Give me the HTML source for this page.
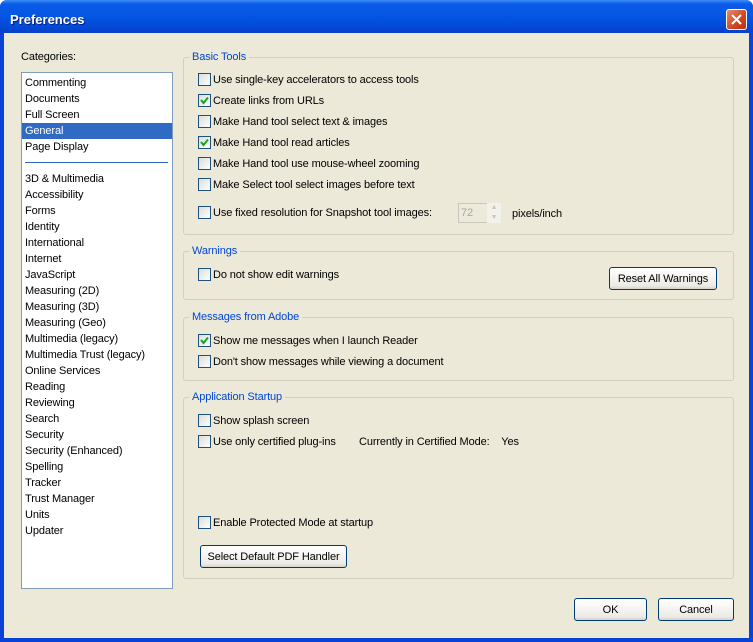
<!DOCTYPE html>
<html><head><style>
body{margin:0;width:753px;height:642px;overflow:hidden;font-family:"Liberation Sans",Tahoma,sans-serif;font-size:11px;color:#000;letter-spacing:-0.12px}
.win{position:absolute;left:0;top:0;width:753px;height:642px;background:#0842d6;border-radius:7px 7px 0 0;}
.title{position:absolute;left:0;top:0;width:753px;height:33px;background:linear-gradient(#3d8cf6 0,#0a5ce8 4px,#0556e3 16px,#0248d6 28px,#0a40c8 33px);border-radius:7px 7px 0 0;}
.title span{position:absolute;left:10px;top:12px;color:#fff;font-weight:bold;font-size:13px;text-shadow:1px 1px #0a1e78;letter-spacing:0}
.close{position:absolute;left:726px;top:9px;width:19px;height:19px;border:1px solid #fff;border-radius:3px;background:linear-gradient(135deg,#e88a6e,#d0451e 60%,#b8340e);}
.close svg{position:absolute;left:3px;top:3px}
.body{position:absolute;left:4px;top:33px;width:745px;height:605px;background:#ece9d8;}
.a{position:absolute;white-space:nowrap}
.t{margin-top:1px}
.list{position:absolute;left:21px;top:72px;width:150px;height:515px;background:#fff;border:1px solid #7f9db9;}
.list div{height:16px;line-height:16px;padding-left:3px}
.sel{background:#316ac5;color:#fff;margin:0 0 0 0}
.grp{position:absolute;border:1px solid #d0d0bf;border-radius:3px;}
.grp .lg{position:absolute;left:5px;top:-7px;background:#ece9d8;color:#0046d5;padding:0 3px;}
.cb{position:absolute;width:11px;height:11px;border:1px solid #1c5180;background:linear-gradient(135deg,#dcdcd7,#fff);}
.btn{position:absolute;height:21px;border:1px solid #003c74;border-radius:3px;background:linear-gradient(#fff,#ecebe6 85%,#d6d0c5);text-align:center;line-height:22px;}
</style></head><body>
<div class="win"><div class="title"><span>Preferences</span>
<div class="close"><svg width="13" height="13"><path d="M2 2L11 11M11 2L2 11" stroke="#fff" stroke-width="2"/></svg></div></div></div>
<div class="body"></div>
<div class="a" style="left:21px;top:51px">Categories:</div>
<div class="list">
<div style="margin-top:2px">Commenting</div><div>Documents</div><div>Full Screen</div><div class="sel">General</div><div>Page Display</div>
<div style="height:7px;border-bottom:1px solid #316ac5;margin:0 4px 8px 3px;padding:0"></div>
<div>3D &amp; Multimedia</div><div>Accessibility</div><div>Forms</div><div>Identity</div><div>International</div><div>Internet</div><div>JavaScript</div><div>Measuring (2D)</div><div>Measuring (3D)</div><div>Measuring (Geo)</div><div>Multimedia (legacy)</div><div>Multimedia Trust (legacy)</div><div>Online Services</div><div>Reading</div><div>Reviewing</div><div>Search</div><div>Security</div><div>Security (Enhanced)</div><div>Spelling</div><div>Tracker</div><div>Trust Manager</div><div>Units</div><div>Updater</div>
</div>

<div class="grp" style="left:183px;top:57px;width:549px;height:176px"><span class="lg a">Basic Tools</span></div>
<div class="grp" style="left:183px;top:251px;width:549px;height:47px"><span class="lg a">Warnings</span></div>
<div class="grp" style="left:183px;top:317px;width:549px;height:62px"><span class="lg a">Messages from Adobe</span></div>
<div class="grp" style="left:183px;top:397px;width:549px;height:180px"><span class="lg a">Application Startup</span></div>

<div class="cb" style="left:198px;top:73px"></div><div class="a t" style="left:213px;top:73px">Use single-key accelerators to access tools</div>
<div class="cb" style="left:198px;top:94px"></div><div class="a t" style="left:213px;top:94px">Create links from URLs</div>
<div class="cb" style="left:198px;top:115px"></div><div class="a t" style="left:213px;top:115px">Make Hand tool select text &amp; images</div>
<div class="cb" style="left:198px;top:136px"></div><div class="a t" style="left:213px;top:136px">Make Hand tool read articles</div>
<div class="cb" style="left:198px;top:157px"></div><div class="a t" style="left:213px;top:157px">Make Hand tool use mouse-wheel zooming</div>
<div class="cb" style="left:198px;top:178px"></div><div class="a t" style="left:213px;top:178px">Make Select tool select images before text</div>
<div class="cb" style="left:198px;top:206px"></div><div class="a t" style="left:213px;top:206px">Use fixed resolution for Snapshot tool images:</div>
<div class="a" style="left:458px;top:203px;width:27px;height:18px;border:1px solid #c9c7ba;background:#ebeadb;color:#aca899;line-height:18px;padding-left:2px">72</div>
<div class="a" style="left:487px;top:203px;width:14px;height:20px;background:#f2f1ea;color:#c9c7ba;font-size:7px;line-height:10px;text-align:center">▲<br>▼</div>
<div class="a t" style="left:512px;top:207px">pixels/inch</div>

<div class="cb" style="left:198px;top:268px"></div><div class="a t" style="left:213px;top:268px">Do not show edit warnings</div>
<div class="btn" style="left:609px;top:267px;width:106px">Reset All Warnings</div>

<div class="cb" style="left:198px;top:334px"></div><div class="a t" style="left:213px;top:334px">Show me messages when I launch Reader</div>
<div class="cb" style="left:198px;top:355px"></div><div class="a t" style="left:213px;top:355px">Don't show messages while viewing a document</div>

<div class="cb" style="left:198px;top:414px"></div><div class="a t" style="left:213px;top:414px">Show splash screen</div>
<div class="cb" style="left:198px;top:435px"></div><div class="a t" style="left:213px;top:435px">Use only certified plug-ins</div>
<div class="a t" style="left:359px;top:435px">Currently in Certified Mode:&nbsp;&nbsp;&nbsp;&nbsp;Yes</div>
<div class="cb" style="left:198px;top:516px"></div><div class="a t" style="left:213px;top:516px">Enable Protected Mode at startup</div>
<div class="btn" style="left:200px;top:545px;width:145px">Select Default PDF Handler</div>

<div class="btn" style="left:574px;top:598px;width:71px">OK</div>
<div class="btn" style="left:658px;top:598px;width:74px">Cancel</div>

<svg class="a" style="left:199px;top:95px" width="11" height="11"><path d="M2 5L4.5 8L9 2.5" stroke="#21a121" stroke-width="2" fill="none"/></svg>
<svg class="a" style="left:199px;top:137px" width="11" height="11"><path d="M2 5L4.5 8L9 2.5" stroke="#21a121" stroke-width="2" fill="none"/></svg>
<svg class="a" style="left:199px;top:335px" width="11" height="11"><path d="M2 5L4.5 8L9 2.5" stroke="#21a121" stroke-width="2" fill="none"/></svg>
</body></html>
